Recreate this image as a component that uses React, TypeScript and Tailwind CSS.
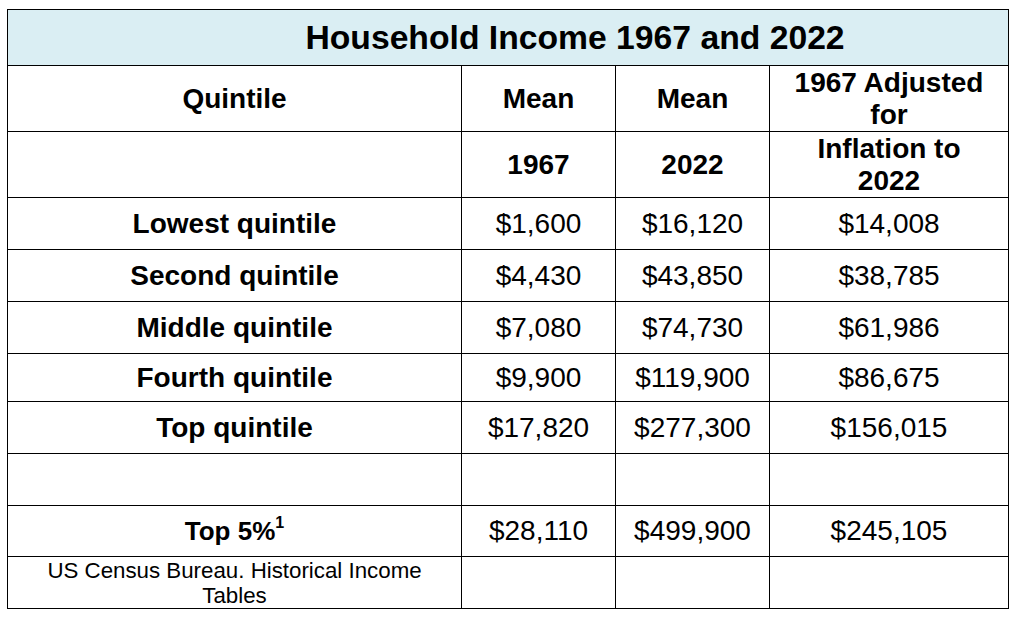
const rows = [
  { label: "Lowest quintile", a: "$1,600", b: "$16,120", c: "$14,008", h: "h-[52px]" },
  { label: "Second quintile", a: "$4,430", b: "$43,850", c: "$38,785", h: "h-[52px]" },
  { label: "Middle quintile", a: "$7,080", b: "$74,730", c: "$61,986", h: "h-[52px]" },
  { label: "Fourth quintile", a: "$9,900", b: "$119,900", c: "$86,675", h: "h-[48px]" },
  { label: "Top quintile", a: "$17,820", b: "$277,300", c: "$156,015", h: "h-[52px]" },
];

const cell = "border border-black text-center align-middle p-0";

export default function App() {
  return (
    <div className="min-h-[618px] w-[1015px] bg-white pl-[7px] pt-[9px] font-['Liberation_Sans',Arial,sans-serif] text-black">
      <table className="w-[1001px] table-fixed border-collapse">
        <colgroup>
          <col className="w-[454px]" />
          <col className="w-[154px]" />
          <col className="w-[154px]" />
          <col className="w-[239px]" />
        </colgroup>
        <tbody>
          <tr className="h-[56px]">
            <td colSpan={4} className={`${cell} bg-[#daeef3] pl-[134px] text-[33.7px] font-bold`}>
              Household Income 1967 and 2022
            </td>
          </tr>
          <tr className="h-[66px] text-[28px] font-bold leading-[32px]">
            <td className={cell}>Quintile</td>
            <td className={cell}>Mean</td>
            <td className={cell}>Mean</td>
            <td className={cell}>
              1967 Adjusted
              <br />
              for
            </td>
          </tr>
          <tr className="h-[66px] text-[28px] font-bold leading-[32px]">
            <td className={cell}></td>
            <td className={cell}>1967</td>
            <td className={cell}>2022</td>
            <td className={cell}>
              Inflation to
              <br />
              2022
            </td>
          </tr>
          {rows.map((r) => (
            <tr key={r.label} className={`${r.h} text-[28px]`}>
              <td className={`${cell} font-bold`}>{r.label}</td>
              <td className={cell}>{r.a}</td>
              <td className={cell}>{r.b}</td>
              <td className={cell}>{r.c}</td>
            </tr>
          ))}
          <tr className="h-[52px]">
            <td className={cell}></td>
            <td className={cell}></td>
            <td className={cell}></td>
            <td className={cell}></td>
          </tr>
          <tr className="h-[51px] text-[28px]">
            <td className={`${cell} font-bold`}>
              <span className="text-[26px]">Top 5%</span>
              <sup className="text-[16px] align-[4px]">1</sup>
            </td>
            <td className={cell}>$28,110</td>
            <td className={cell}>$499,900</td>
            <td className={cell}>$245,105</td>
          </tr>
          <tr className="h-[52px]">
            <td className={`${cell} px-[30px] text-[22.3px] leading-[25px]`}>
              US Census Bureau. Historical Income
              <br />
              Tables
            </td>
            <td className={cell}></td>
            <td className={cell}></td>
            <td className={cell}></td>
          </tr>
        </tbody>
      </table>
    </div>
  );
}
